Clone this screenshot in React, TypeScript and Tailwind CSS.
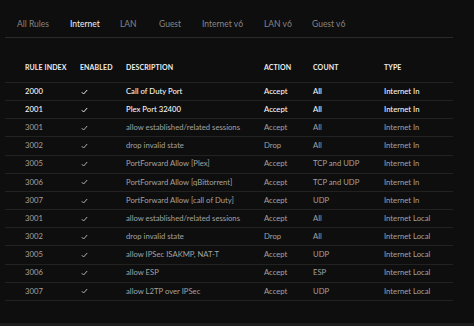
import React from "react";

type Row = { idx: string; desc: string; action: string; count: string; type: string; hi?: boolean };

const rows: Row[] = [
  { idx: "2000", desc: "Call of Duty Port", action: "Accept", count: "All", type: "Internet In", hi: true },
  { idx: "2001", desc: "Plex Port 32400", action: "Accept", count: "All", type: "Internet In", hi: true },
  { idx: "3001", desc: "allow established/related sessions", action: "Accept", count: "All", type: "Internet In" },
  { idx: "3002", desc: "drop invalid state", action: "Drop", count: "All", type: "Internet In" },
  { idx: "3005", desc: "PortForward Allow [Plex]", action: "Accept", count: "TCP and UDP", type: "Internet In" },
  { idx: "3006", desc: "PortForward Allow [qBittorrent]", action: "Accept", count: "TCP and UDP", type: "Internet In" },
  { idx: "3007", desc: "PortForward Allow [call of Duty]", action: "Accept", count: "UDP", type: "Internet In" },
  { idx: "3001", desc: "allow established/related sessions", action: "Accept", count: "All", type: "Internet Local" },
  { idx: "3002", desc: "drop invalid state", action: "Drop", count: "All", type: "Internet Local" },
  { idx: "3005", desc: "allow IPSec ISAKMP, NAT-T", action: "Accept", count: "UDP", type: "Internet Local" },
  { idx: "3006", desc: "allow ESP", action: "Accept", count: "ESP", type: "Internet Local" },
  { idx: "3007", desc: "allow L2TP over IPSec", action: "Accept", count: "UDP", type: "Internet Local" },
];

const tabs = ["All Rules", "Internet", "LAN", "Guest", "Internet v6", "LAN v6", "Guest v6"];
const tabW = ["w-[53px]", "w-[50px]", "w-[39px]", "w-[43px]", "w-[62px]", "w-[48px]", "w-[60px]"];

function Check({ hi }: { hi?: boolean }) {
  return (
    <svg width="7" height="6" viewBox="0 0 7 6" className="block">
      <polyline points="0.8,3.2 2.6,5 6.2,1" fill="none" stroke={hi ? "#e8e8e8" : "#b0b0b0"} strokeWidth="1" />
    </svg>
  );
}

export default function App() {
  return (
    <div className="w-[474px] h-[326px] bg-[#0e0e0e] overflow-hidden flex flex-col" style={{ fontFamily: "Lato, 'Noto Sans', sans-serif" }}>
      <div className="ml-[5px] w-[448px] flex flex-col">
        <div className="flex pl-[12px] pt-[18px] pb-[7px] border-b border-[#2a2a2a] text-[8.5px] leading-[12px]">
          {tabs.map((t, i) => (
            <div key={t} className={`${tabW[i]} ${i === 1 ? "text-[#f0f0f0]" : "text-[#858585]"}`}>{t}</div>
          ))}
        </div>
        <div className="h-[15px]" />
        <div className="flex items-center h-[30px] border-b border-[#222] pl-[20px] text-[7px] font-bold text-[#ececec] tracking-[0.1px]">
          <div className="w-[55px]">RULE INDEX</div>
          <div className="w-[46px]">ENABLED</div>
          <div className="w-[138px]">DESCRIPTION</div>
          <div className="w-[49px]">ACTION</div>
          <div className="w-[71px]">COUNT</div>
          <div>TYPE</div>
        </div>
        {rows.map((r, i) => (
          <div
            key={i}
            className={`flex items-center h-[18.17px] border-b border-[#222] pl-[20px] text-[7.7px] ${r.hi ? "text-[#f4f4f4] font-medium" : "text-[#a2a2a2]"}`}
          >
            <div className="w-[55px]">{r.idx}</div>
            <div className="w-[46px] pl-[1px]"><Check hi={r.hi} /></div>
            <div className="w-[138px]">{r.desc}</div>
            <div className="w-[49px]">{r.action}</div>
            <div className="w-[71px]">{r.count}</div>
            <div>{r.type}</div>
          </div>
        ))}
      </div>
      <div className="flex-1" />
      <div className="h-[3px] bg-[#1c1c1c]" />
    </div>
  );
}
